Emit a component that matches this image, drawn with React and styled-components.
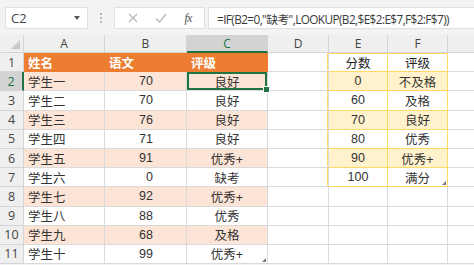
import * as React from 'react';
import styled, { createGlobalStyle } from 'styled-components';

const Global = createGlobalStyle`
  html, body {
    margin: 0;
    padding: 0;
    background: #ffffff;
    overflow: hidden;
  }
  body {
    font-family: "Liberation Sans", "Noto Sans CJK SC", sans-serif;
  }
`;

const Page = styled.div`
  width: 474px;
  height: 265px;
  overflow: hidden;
  background: #f3f3f3;
`;

const FormulaBar = styled.div`
  height: 35px;
  display: flex;
  align-items: flex-start;
  padding-top: 7px;
  box-sizing: border-box;
  background: #f3f3f3;
`;

const NameBox = styled.div`
  margin-left: 5px;
  width: 83px;
  height: 22px;
  box-sizing: border-box;
  background: #fff;
  border: 1px solid #e1e1e1;
  display: flex;
  align-items: center;
  justify-content: space-between;
  padding: 0 5px 0 5px;
  font-family: "Open Sans", "Liberation Sans", sans-serif;
  font-size: 13px;
  color: #444;
`;

const Caret = styled.span`
  width: 0;
  height: 0;
  border-left: 3px solid transparent;
  border-right: 3px solid transparent;
  border-top: 4px solid #555;
  margin-right: 2px;
`;

const Dots = styled.div`
  width: 26px;
  height: 22px;
  display: flex;
  flex-direction: column;
  align-items: center;
  justify-content: center;
  gap: 2px;
  span {
    width: 2px;
    height: 2px;
    background: #b8b8b8;
  }
`;

const ActionBox = styled.div`
  width: 91px;
  height: 22px;
  box-sizing: border-box;
  background: #fff;
  border: 1px solid #e1e1e1;
  display: flex;
  align-items: center;
  justify-content: space-around;
  padding: 0 4px;
`;

const Fx = styled.span`
  font-family: "Liberation Serif", serif;
  font-style: italic;
  font-size: 12px;
  color: #555;
  letter-spacing: -1px;
`;

const FormulaInput = styled.div`
  margin-left: 3px;
  flex: 1;
  min-width: 0;
  height: 22px;
  box-sizing: border-box;
  background: #fff;
  border: 1px solid #e1e1e1;
  border-right: none;
  display: flex;
  align-items: center;
  padding-left: 8px;
  font-family: "Open Sans", "Liberation Sans", "Noto Sans CJK SC", sans-serif;
  font-size: 11.8px;
  letter-spacing: -0.6px;
  color: #3a3a3a;
  white-space: nowrap;
  overflow: hidden;
`;

const Sheet = styled.div`
  display: grid;
  grid-template-columns: 24px 81px 82px 81px 61px 59px 60px 60px;
  grid-template-rows: 18px repeat(11, 19.2px);
  background: #fff;
`;

const Corner = styled.div`
  background: #efefef;
  border-right: 1px solid #d4d4d4;
  border-bottom: 1px solid #d4d4d4;
  box-sizing: border-box;
  position: relative;
  &::after {
    content: '';
    position: absolute;
    right: 3px;
    bottom: 3px;
    width: 0;
    height: 0;
    border-left: 9px solid transparent;
    border-bottom: 9px solid #c8c8c8;
  }
`;

const ColHead = styled.div`
  background: ${(p) => (p.$active ? '#d3d3d3' : '#efefef')};
  color: ${(p) => (p.$active ? '#217346' : '#444')};
  border-right: 1px solid #d4d4d4;
  border-bottom: ${(p) => (p.$active ? '2px solid #217346' : '1px solid #d4d4d4')};
  box-sizing: border-box;
  display: flex;
  align-items: center;
  justify-content: center;
  font-family: "Open Sans", "Liberation Sans", sans-serif;
  font-size: 12px;
`;

const RowHead = styled.div`
  background: ${(p) => (p.$active ? '#d3d3d3' : '#efefef')};
  color: ${(p) => (p.$active ? '#217346' : '#444')};
  border-right: ${(p) => (p.$active ? '2px solid #217346' : '1px solid #d4d4d4')};
  border-bottom: 1px solid #d4d4d4;
  box-sizing: border-box;
  display: flex;
  align-items: center;
  justify-content: center;
  font-family: "Open Sans", "Liberation Sans", sans-serif;
  font-size: 12.5px;
`;

const Cell = styled.div`
  background: ${(p) => p.$fill || '#fff'};
  color: ${(p) => p.$color || '#333'};
  font-weight: ${(p) => (p.$bold ? 700 : 400)};
  border-right: 1px solid ${(p) => p.$line || '#dadada'};
  border-bottom: 1px solid ${(p) => p.$line || '#dadada'};
  box-shadow: ${(p) => p.$shadow || 'none'};
  box-sizing: border-box;
  display: flex;
  align-items: center;
  justify-content: ${(p) =>
    p.$align === 'right' ? 'flex-end' : p.$align === 'center' ? 'center' : 'flex-start'};
  padding: ${(p) => (p.$align === 'right' ? '0 33px 0 0' : p.$align === 'center' ? '0' : '0 0 0 4px')};
  font-size: 12.5px;
  white-space: nowrap;
  position: relative;
`;

const ActiveCell = styled(Cell)`
  box-shadow: inset 0 0 0 2px #217346;
  &::after {
    content: '';
    position: absolute;
    right: -3px;
    bottom: -3px;
    width: 5px;
    height: 5px;
    background: #217346;
    border: 1px solid #fff;
    z-index: 2;
  }
`;

const Handle = styled.span`
  position: absolute;
  right: 1px;
  bottom: 1px;
  width: 0;
  height: 0;
  border-left: 4px solid transparent;
  border-bottom: 4px solid #777;
`;

const ORANGE = '#ed7d31';
const PEACH = '#fce4d6';
const YELLOW_FILL = '#fff2cc';
const YELLOW_LINE = '#ffd966';

const students = [
  ['学生一', 70, '良好'],
  ['学生二', 70, '良好'],
  ['学生三', 76, '良好'],
  ['学生四', 71, '良好'],
  ['学生五', 91, '优秀+'],
  ['学生六', 0, '缺考'],
  ['学生七', 92, '优秀+'],
  ['学生八', 88, '优秀'],
  ['学生九', 68, '及格'],
  ['学生十', 99, '优秀+'],
];

const lookup = [
  ['分数', '评级'],
  ['0', '不及格'],
  ['60', '及格'],
  ['70', '良好'],
  ['80', '优秀'],
  ['90', '优秀+'],
  ['100', '满分'],
];

// the last column's letter sits past the right edge of the window
const cols = ['A', 'B', 'C', 'D', 'E', 'F', ''];

function CheckIcon() {
  return (
    <svg width="12" height="10" viewBox="0 0 12 10">
      <path d="M1 5.5 L4.5 9 L11 1" fill="none" stroke="#b8b8b8" strokeWidth="1.3" />
    </svg>
  );
}

function CrossIcon() {
  return (
    <svg width="10" height="10" viewBox="0 0 10 10">
      <path d="M1 1 L9 9 M9 1 L1 9" fill="none" stroke="#b8b8b8" strokeWidth="1.3" />
    </svg>
  );
}

function Row({ index }) {
  const r = index + 1;
  const active = r === 2;
  const cells = [];

  if (r === 1) {
    cells.push(
      <Cell key="a" $fill={ORANGE} $color="#fff" $bold $line={ORANGE}>姓名</Cell>,
      <Cell key="b" $fill={ORANGE} $color="#fff" $bold $line={ORANGE}>语文</Cell>,
      <Cell key="c" $fill={ORANGE} $color="#fff" $bold $line={ORANGE}>评级</Cell>
    );
  } else {
    const [name, score, grade] = students[r - 2];
    const fill = r % 2 === 0 ? PEACH : '#fff';
    cells.push(
      <Cell key="a" $fill={fill}>{name}</Cell>,
      <Cell key="b" $fill={fill} $align="right">{score}</Cell>
    );
    if (active) {
      cells.push(<ActiveCell key="c" $fill={fill} $align="center">{grade}</ActiveCell>);
    } else {
      cells.push(
        <Cell key="c" $fill={fill} $align="center">
          {grade}
          {r === 11 && <Handle />}
        </Cell>
      );
    }
  }

  const inLookup = r <= 7;
  cells.push(<Cell key="d" $shadow={inLookup ? `inset -1px 0 0 ${YELLOW_LINE}` : 'none'} />);

  if (inLookup) {
    const [e, f] = lookup[r - 1];
    const fill = r % 2 === 0 ? YELLOW_FILL : '#fff';
    const top = r === 1 ? `inset 0 1px 0 ${YELLOW_LINE}` : 'none';
    const color = r === 1 ? '#222' : '#333';
    cells.push(
      <Cell key="e" $fill={fill} $align="center" $line={YELLOW_LINE} $shadow={top} $color={color}>{e}</Cell>,
      <Cell key="f" $fill={fill} $align="center" $line={YELLOW_LINE} $shadow={top} $color={color}>
        {f}
        {r === 7 && <Handle />}
      </Cell>
    );
  } else {
    cells.push(<Cell key="e" />, <Cell key="f" />);
  }
  cells.push(<Cell key="g" />);

  return (
    <>
      <RowHead $active={active}>{r}</RowHead>
      {cells}
    </>
  );
}

export default function App() {
  return (
    <Page>
      <Global />
      <FormulaBar>
        <NameBox>
          C2
          <Caret />
        </NameBox>
        <Dots>
          <span />
          <span />
          <span />
        </Dots>
        <ActionBox>
          <CrossIcon />
          <CheckIcon />
          <Fx>fx</Fx>
        </ActionBox>
        <FormulaInput>=IF(B2=0,"缺考",LOOKUP(B2,$E$2:E$7,F$2:F$7))</FormulaInput>
      </FormulaBar>
      <Sheet>
        <Corner />
        {cols.map((c, i) => (
          <ColHead key={i} $active={c === 'C'}>{c}</ColHead>
        ))}
        {Array.from({ length: 11 }, (_, i) => (
          <Row key={i} index={i} />
        ))}
      </Sheet>
    </Page>
  );
}
